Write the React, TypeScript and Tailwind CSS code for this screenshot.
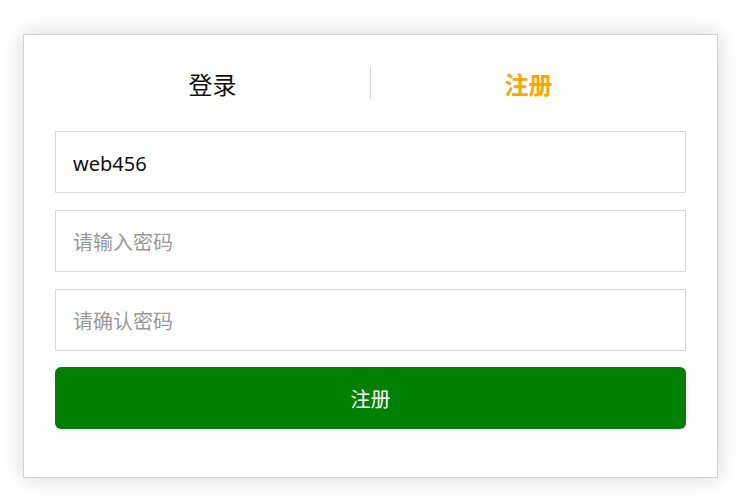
import React from "react";

export default function App() {
  const font = { fontFamily: '"Noto Sans", "Noto Sans CJK SC", sans-serif' };
  return (
    <div className="w-[740px] h-[502px] bg-white overflow-hidden" style={font}>
      <div className="ml-[23px] mt-[34px] w-[695px] border border-[#d3d3d3] bg-white shadow-[0_0_22px_rgba(0,0,0,0.16)] px-[31px] pt-[32px] pb-[48px]">
        <div className="flex h-[32px]">
          <div className="flex-1 flex items-center justify-center pt-[4px] text-[24px] text-[#111] leading-none">登录</div>
          <div className="flex-1 flex items-center justify-center pt-[4px] border-l border-[#d3d3d3] text-[24px] font-bold text-[#ffa500] leading-none">注册</div>
        </div>
        <div className="mt-[32px] flex flex-col gap-[17px]">
          <input
            className="block w-full h-[62px] border border-[#d9d9d9] px-[17px] pt-[2px] text-[20px] text-[#111] outline-none placeholder:text-[#999]"
            defaultValue="web456"
          />
          <input
            type="password"
            className="block w-full h-[62px] border border-[#d9d9d9] px-[17px] pt-[2px] text-[20px] text-[#111] outline-none placeholder:text-[#999]"
            placeholder="请输入密码"
          />
          <input
            type="password"
            className="block w-full h-[62px] border border-[#d9d9d9] px-[17px] pt-[2px] text-[20px] text-[#111] outline-none placeholder:text-[#999]"
            placeholder="请确认密码"
          />
        </div>
        <button className="mt-[16px] block w-full h-[62px] rounded-[6px] bg-[#008000] pt-[3px] text-white text-[20px]">
          注册
        </button>
      </div>
    </div>
  );
}
